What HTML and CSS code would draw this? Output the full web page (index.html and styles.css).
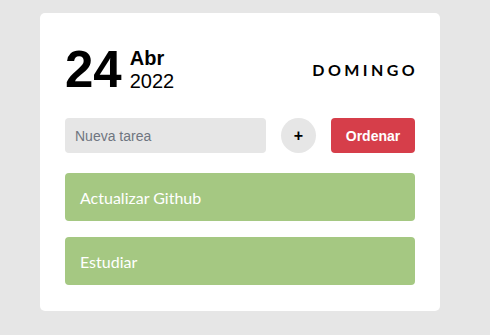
FILE: index.html
```html
<!DOCTYPE html>
<html lang="es">
<head>
	<meta charset="UTF-8">
	<meta name="viewport" content="width=device-width, initial-scale=1.0">
	<title>Tareas</title>
	<link rel="stylesheet" href="styles.css">
</head>
<body>
	<div class="card">
		<div class="date-row">
			<div class="date">
				<span class="day">24</span>
				<div class="month-year">
					<span class="month">Abr</span>
					<span class="year">2022</span>
				</div>
			</div>
			<div class="weekday">DOMINGO</div>
		</div>

		<form class="new-task">
			<input type="text" class="task-input" placeholder="Nueva tarea">
			<button type="button" class="btn-add">+</button>
			<button type="button" class="btn-order">Ordenar</button>
		</form>

		<div class="tasks">
			<div class="task">Actualizar Github</div>
			<div class="task">Estudiar</div>
		</div>
	</div>
</body>
</html>
```

FILE: styles.css
```css
body {
	margin: 0;
	background-color: #e6e6e6;
	font-family: "Liberation Sans", Arial, sans-serif;
}
.card {
	width: 350px;
	margin: 13px 0 0 40px;
	padding: 28px 25px 26px;
	background-color: #fff;
	border-radius: 5px;
}
.date-row {
	display: flex;
	justify-content: space-between;
	align-items: center;
	height: 57px;
}
.date {
	display: flex;
	align-items: center;
}
.day {
	font-size: 51px;
	font-weight: bold;
	line-height: 1;
}
.month-year {
	display: flex;
	flex-direction: column;
	margin-left: 8px;
	font-size: 20px;
	line-height: 23px;
}
.month {
	font-weight: bold;
}
.weekday {
	font-family: Lato, sans-serif;
	font-weight: bold;
	font-size: 16px;
	letter-spacing: 3.4px;
	margin-right: -3px;
}
.new-task {
	display: flex;
	align-items: center;
	margin-top: 20px;
}
.task-input {
	width: 201px;
	height: 35px;
	box-sizing: border-box;
	border: none;
	border-radius: 4px;
	background-color: #e6e6e6;
	padding: 0 10px;
	font-family: "Liberation Sans", Arial, sans-serif;
	font-size: 14px;

	&::placeholder {
		color: #6f7580;
	}
}
.btn-add {
	width: 35px;
	height: 35px;
	margin-left: 15px;
	border: none;
	border-radius: 50%;
	background-color: #e6e6e6;
	font-family: "Liberation Sans", Arial, sans-serif;
	font-size: 16px;
	font-weight: bold;
	padding: 0;
	cursor: pointer;
}
.btn-order {
	width: 84px;
	height: 35px;
	margin-left: auto;
	border: none;
	border-radius: 4px;
	background-color: #d63e4a;
	color: #fff;
	font-family: "Liberation Sans", Arial, sans-serif;
	font-size: 14px;
	font-weight: bold;
	cursor: pointer;
}
.tasks {
	display: flex;
	flex-direction: column;
	gap: 16px;
	margin-top: 20px;
}
.task {
	height: 48px;
	display: flex;
	align-items: center;
	padding: 0 15px;
	border-radius: 4px;
	background-color: #a5c882;
	color: #fff;
	font-family: Lato, sans-serif;
	font-size: 16px;
}
```
